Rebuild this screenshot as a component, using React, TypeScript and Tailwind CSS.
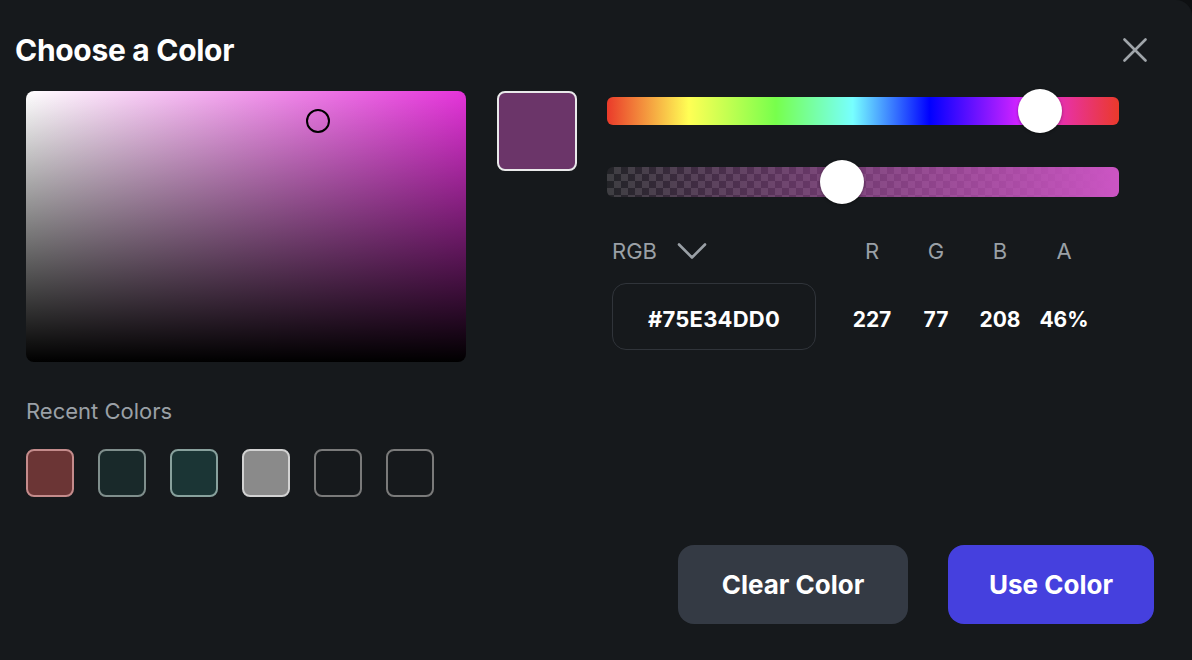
const recent = [
  { fill: "bg-[#6b3535]", ring: "border-[#c48b8b]" },
  { fill: "bg-[#19292a]", ring: "border-[#7f8e8c]" },
  { fill: "bg-[#1b3535]", ring: "border-[#88a19d]" },
  { fill: "bg-[#8a8a8a]", ring: "border-[#d2d2d2]" },
  { fill: "bg-transparent", ring: "border-[#7a7a7a]" },
  { fill: "bg-transparent", ring: "border-[#7a7a7a]" },
];

const channels = [
  { label: "R", value: "227" },
  { label: "G", value: "77" },
  { label: "B", value: "208" },
  { label: "A", value: "46%" },
];

export default function App() {
  return (
    <div className="h-[660px] w-[1192px] overflow-hidden bg-[#0e1012] font-['Inter','Liberation_Sans',sans-serif] text-white">
      <div className="relative h-full w-full rounded-tr-2xl bg-[#16191c]">
        {/* Header */}
        <div className="flex items-center justify-between pl-[15px] pr-[45px] pt-[32px]">
          <h1 className="text-[30px] font-bold leading-[36px] tracking-[-0.01em]">Choose a Color</h1>
          <svg width="24" height="24" viewBox="0 0 24 24" className="text-[#a0a5aa]">
            <path d="M1.5 1.5 L22.5 22.5 M22.5 1.5 L1.5 22.5" stroke="currentColor" strokeWidth="2.6" strokeLinecap="round" />
          </svg>
        </div>

        {/* Body */}
        <div className="flex pl-[26px] pt-[23px]">
          {/* Left column */}
          <div className="flex w-[440px] flex-col">
            <div className="relative h-[271px] w-[440px] rounded-lg bg-[linear-gradient(to_top,#000,rgba(0,0,0,0)),linear-gradient(to_right,#fff,#e533da)]">
              <div className="absolute left-[280px] top-[18px] h-[24px] w-[24px] rounded-full border-[2.5px] border-black" />
            </div>
            <div className="mt-[34px] text-[22px] leading-[30px] text-[#9aa0a6]">Recent Colors</div>
            <div className="mt-[23px] flex gap-[24px]">
              {recent.map((c, i) => (
                <div key={i} className={`h-[48px] w-[48px] rounded-lg border-2 ${c.fill} ${c.ring}`} />
              ))}
            </div>
          </div>

          {/* Preview swatch */}
          <div className="ml-[31px] h-[80px] w-[80px] rounded-lg border-2 border-[#e9e9ea] bg-[#6b3569]" />

          {/* Right column */}
          <div className="ml-[30px] flex w-[512px] flex-col">
            <div className="relative mt-[6px] h-[28px] w-full rounded-md bg-[linear-gradient(to_right,#ea3a2a_0%,#ffff55_16%,#77ff4c_33%,#77ffff_48%,#0000ff_63%,#cc22ff_80%,#e8329c_90%,#ea3a2a_100%)]">
              <div className="absolute left-[411px] top-[-8px] h-[44px] w-[44px] rounded-full bg-white shadow-[0_1px_3px_rgba(0,0,0,0.4)]" />
            </div>
            <div className="relative mt-[42px] h-[30px] w-full rounded-md bg-[linear-gradient(to_right,rgba(204,85,196,0),rgba(204,85,196,1)),repeating-conic-gradient(#3e3e42_0%_25%,#232428_0%_50%)] [background-size:100%_100%,14px_14px]">
              <div className="absolute left-[213px] top-[-7px] h-[44px] w-[44px] rounded-full bg-white shadow-[0_1px_3px_rgba(0,0,0,0.4)]" />
            </div>

            <div className="mt-[39px] flex">
              <div className="flex w-[209px] flex-col pl-[5px]">
                <div className="flex h-[30px] items-center gap-[20px] text-[22px] text-[#9aa0a6]">
                  <span>RGB</span>
                  <svg width="30" height="18" viewBox="0 0 30 18">
                    <path d="M2 2.5 L15 15.5 L28 2.5" fill="none" stroke="currentColor" strokeWidth="2.6" strokeLinecap="round" strokeLinejoin="round" />
                  </svg>
                </div>
                <div className="mt-[17px] flex h-[67px] w-[204px] items-center justify-center rounded-[14px] border border-[#30343a] pt-[6px] text-[22px] font-bold tracking-[0.01em]">
                  #75E34DD0
                </div>
              </div>
              <div className="ml-[24px] flex">
                {channels.map((ch) => (
                  <div key={ch.label} className="flex w-[64px] flex-col items-center">
                    <div className="flex h-[30px] items-center text-[22px] text-[#9aa0a6]">{ch.label}</div>
                    <div className="mt-[17px] flex h-[67px] items-center pt-[6px] text-[21px] font-bold">{ch.value}</div>
                  </div>
                ))}
              </div>
            </div>
          </div>
        </div>

        {/* Footer buttons */}
        <div className="absolute bottom-[36px] right-[38px] flex gap-[40px]">
          <button className="h-[79px] w-[230px] rounded-2xl bg-[#343a44] text-[26px] font-bold">Clear Color</button>
          <button className="h-[79px] w-[206px] rounded-2xl bg-[#4540de] text-[26px] font-bold">Use Color</button>
        </div>
      </div>
    </div>
  );
}
